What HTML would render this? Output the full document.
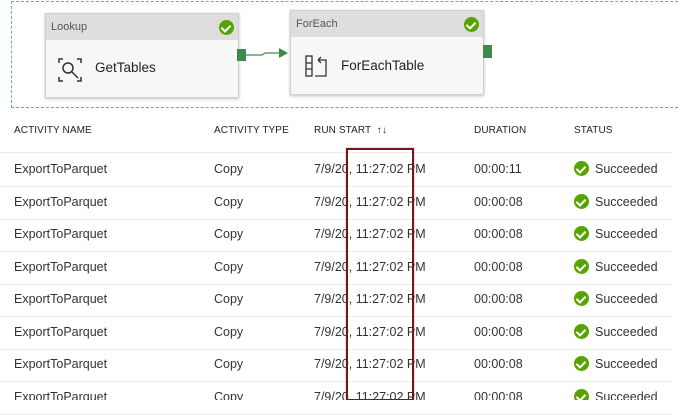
<!DOCTYPE html><html><head><style>
body{margin:0;width:680px;height:411px;background:#fff;font-family:"Liberation Sans",sans-serif;position:relative;overflow:hidden;color:#333}
.abs{position:absolute}
.box{position:absolute;background:#f7f7f7;border:1px solid #d0d0d0;box-shadow:0 1px 3px rgba(0,0,0,.25)}
.hd{background:#dedede;height:26px;font-size:11px;color:#555;padding-left:5px;line-height:26px;position:relative}
.ck{position:absolute;width:15px;height:15px;border-radius:50%;background:#57a300}
.ck:after{content:"";position:absolute;left:4px;top:3px;width:4px;height:7px;border:solid #fff;border-width:0 2px 2px 0;transform:rotate(45deg)}
.th{position:absolute;top:125px;font-size:10px;color:#222;letter-spacing:.1px}
.row{position:absolute;left:0;width:672px;height:32.5px;border-bottom:1px solid #ececec;font-size:12.5px;color:#333}
.row span{position:absolute;top:9px}
.row .ck{top:8px;left:574px}
</style></head><body>
<div class="abs" style="left:11px;top:1px;width:720px;height:105px;border:1px dashed #6aa9b0"></div>
<div class="box" style="left:45px;top:13px;width:192px;height:83px"><div class="hd">Lookup<div class="ck" style="right:4px;top:6px"></div></div>
<svg class="abs" style="left:12px;top:44px" width="24" height="24" viewBox="0 0 24 24" fill="none" stroke="#333" stroke-width="1.5"><path d="M1 5V1h4M19 1h4v4M23 19v4h-4M5 23H1v-4"/><circle cx="10" cy="10" r="5"/><path d="M14 14l6 6"/></svg>
<div class="abs" style="left:49px;top:46px;font-size:13.5px;color:#222">GetTables</div></div>
<div class="abs" style="left:237px;top:49px;width:9px;height:12px;background:#3d8a4e"></div>
<svg class="abs" style="left:246px;top:45px" width="46" height="16"><path d="M0 10h16l3-2h14" stroke="#3d8a4e" stroke-width="1.2" fill="none"/><path d="M33 3l9 5-9 5z" fill="#3d8a4e"/></svg>
<div class="box" style="left:290px;top:10px;width:192px;height:83px"><div class="hd">ForEach<div class="ck" style="right:4px;top:6px"></div></div>
<svg class="abs" style="left:14px;top:43px" width="24" height="24" viewBox="0 0 24 24" fill="none" stroke="#333" stroke-width="1.3"><rect x="1" y="2" width="6" height="20"/><path d="M1 9h6M1 15h6M10 22h11V6h-8M13 6l3-3M13 6l3 3"/></svg>
<div class="abs" style="left:50px;top:47px;font-size:13.5px;color:#222">ForEachTable</div></div>
<div class="abs" style="left:483px;top:45px;width:9px;height:13px;background:#3d8a4e"></div>
<div class="th" style="left:14px">ACTIVITY NAME</div>
<div class="th" style="left:214px">ACTIVITY TYPE</div>
<div class="th" style="left:314px">RUN START &nbsp;↑↓</div>
<div class="th" style="left:474px">DURATION</div>
<div class="th" style="left:574px">STATUS</div>
<div class="row" style="top:120px;height:32px"></div>
<div class="row" style="top:153px"><span style="left:14px">ExportToParquet</span><span style="left:214px">Copy</span><span style="left:314px">7/9/20, 11:27:02 PM</span><span style="left:474px">00:00:11</span><div class="ck"></div><span style="left:595px">Succeeded</span></div>
<div class="row" style="top:186px"><span style="left:14px">ExportToParquet</span><span style="left:214px">Copy</span><span style="left:314px">7/9/20, 11:27:02 PM</span><span style="left:474px">00:00:08</span><div class="ck"></div><span style="left:595px">Succeeded</span></div>
<div class="row" style="top:218px"><span style="left:14px">ExportToParquet</span><span style="left:214px">Copy</span><span style="left:314px">7/9/20, 11:27:02 PM</span><span style="left:474px">00:00:08</span><div class="ck"></div><span style="left:595px">Succeeded</span></div>
<div class="row" style="top:251px"><span style="left:14px">ExportToParquet</span><span style="left:214px">Copy</span><span style="left:314px">7/9/20, 11:27:02 PM</span><span style="left:474px">00:00:08</span><div class="ck"></div><span style="left:595px">Succeeded</span></div>
<div class="row" style="top:283px"><span style="left:14px">ExportToParquet</span><span style="left:214px">Copy</span><span style="left:314px">7/9/20, 11:27:02 PM</span><span style="left:474px">00:00:08</span><div class="ck"></div><span style="left:595px">Succeeded</span></div>
<div class="row" style="top:316px"><span style="left:14px">ExportToParquet</span><span style="left:214px">Copy</span><span style="left:314px">7/9/20, 11:27:02 PM</span><span style="left:474px">00:00:08</span><div class="ck"></div><span style="left:595px">Succeeded</span></div>
<div class="row" style="top:348px"><span style="left:14px">ExportToParquet</span><span style="left:214px">Copy</span><span style="left:314px">7/9/20, 11:27:02 PM</span><span style="left:474px">00:00:08</span><div class="ck"></div><span style="left:595px">Succeeded</span></div>
<div class="row" style="top:381px"><span style="left:14px">ExportToParquet</span><span style="left:214px">Copy</span><span style="left:314px">7/9/20, 11:27:02 PM</span><span style="left:474px">00:00:08</span><div class="ck"></div><span style="left:595px">Succeeded</span></div>
<div class="abs" style="left:346px;top:148px;width:64px;height:249px;border:2px solid #7a1418;box-shadow:0 0 2px rgba(0,0,0,.3)"></div>
<div class="abs" style="left:0;top:400px;width:680px;height:11px;background:#fff"></div>
</body></html>
